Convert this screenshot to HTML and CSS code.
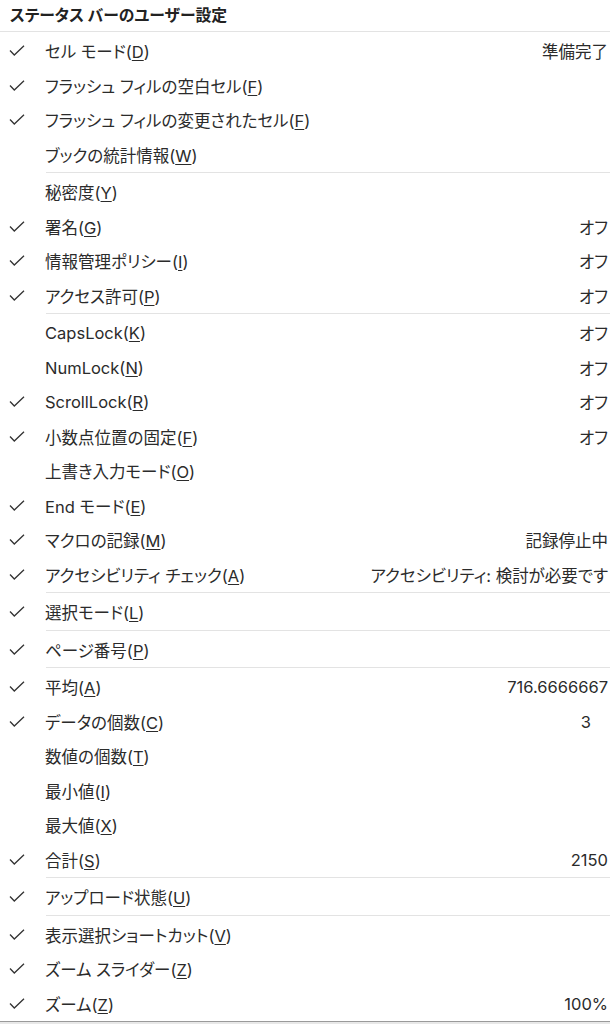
FILE: index.html
```html
<!DOCTYPE html>
<html lang="ja">
<head>
<meta charset="UTF-8" />
<title>ステータス バーのユーザー設定</title>
<link rel="stylesheet" href="styles.css">
</head>
<body>

<div class="menu">
  <div class="menu-title">ステータス バーのユーザー設定</div>

  <ul class="menu-list">
    <li class="item on"><span class="check"></span><span class="label">セル モード(<u>D</u>)</span><span class="value">準備完了</span></li>
    <li class="item on"><span class="check"></span><span class="label">フラッシュ フィルの空白セル(<u>F</u>)</span></li>
    <li class="item on"><span class="check"></span><span class="label">フラッシュ フィルの変更されたセル(<u>F</u>)</span></li>
    <li class="item"><span class="check"></span><span class="label">ブックの統計情報(<u>W</u>)</span></li>
    <li class="sep"></li>
    <li class="item"><span class="check"></span><span class="label">秘密度(<u>Y</u>)</span></li>
    <li class="item on"><span class="check"></span><span class="label">署名(<u>G</u>)</span><span class="value">オフ</span></li>
    <li class="item on"><span class="check"></span><span class="label">情報管理ポリシー(<u>I</u>)</span><span class="value">オフ</span></li>
    <li class="item on"><span class="check"></span><span class="label">アクセス許可(<u>P</u>)</span><span class="value">オフ</span></li>
    <li class="sep"></li>
    <li class="item"><span class="check"></span><span class="label">CapsLock(<u>K</u>)</span><span class="value">オフ</span></li>
    <li class="item"><span class="check"></span><span class="label">NumLock(<u>N</u>)</span><span class="value">オフ</span></li>
    <li class="item on"><span class="check"></span><span class="label">ScrollLock(<u>R</u>)</span><span class="value">オフ</span></li>
    <li class="item on"><span class="check"></span><span class="label">小数点位置の固定(<u>F</u>)</span><span class="value">オフ</span></li>
    <li class="item"><span class="check"></span><span class="label">上書き入力モード(<u>O</u>)</span></li>
    <li class="item on"><span class="check"></span><span class="label">End モード(<u>E</u>)</span></li>
    <li class="item on"><span class="check"></span><span class="label">マクロの記録(<u>M</u>)</span><span class="value">記録停止中</span></li>
    <li class="item on"><span class="check"></span><span class="label">アクセシビリティ チェック(<u>A</u>)</span><span class="value">アクセシビリティ: 検討が必要です</span></li>
    <li class="sep"></li>
    <li class="item on"><span class="check"></span><span class="label">選択モード(<u>L</u>)</span></li>
    <li class="sep"></li>
    <li class="item on"><span class="check"></span><span class="label">ページ番号(<u>P</u>)</span></li>
    <li class="sep"></li>
    <li class="item on"><span class="check"></span><span class="label">平均(<u>A</u>)</span><span class="value">716.6666667</span></li>
    <li class="item on"><span class="check"></span><span class="label">データの個数(<u>C</u>)</span><span class="value value-count">3</span></li>
    <li class="item"><span class="check"></span><span class="label">数値の個数(<u>T</u>)</span></li>
    <li class="item"><span class="check"></span><span class="label">最小値(<u>I</u>)</span></li>
    <li class="item"><span class="check"></span><span class="label">最大値(<u>X</u>)</span></li>
    <li class="item on"><span class="check"></span><span class="label">合計(<u>S</u>)</span><span class="value">2150</span></li>
    <li class="sep"></li>
    <li class="item on"><span class="check"></span><span class="label">アップロード状態(<u>U</u>)</span></li>
    <li class="sep"></li>
    <li class="item on"><span class="check"></span><span class="label">表示選択ショートカット(<u>V</u>)</span></li>
    <li class="item on"><span class="check"></span><span class="label">ズーム スライダー(<u>Z</u>)</span></li>
    <li class="item on"><span class="check"></span><span class="label">ズーム(<u>Z</u>)</span><span class="value">100%</span></li>
  </ul>
</div>

<div class="statusbar"></div>

<script>
  // draw the tick for every checked item
  var tick = '<svg width="16" height="12" viewBox="0 0 16 12"><path d="M1 5.5 L5.3 10 L15 0.8" fill="none" stroke="#333" stroke-width="1.3"/></svg>';
  var marks = document.querySelectorAll('.item.on .check');
  for (var i = 0; i < marks.length; i++) {
    marks[i].innerHTML = tick;
  }
</script>

</body>
</html>
```

FILE: styles.css
```css
body {
  margin: 0;
  background: #fff;
  color: #2b2b2b;
  font-family: Inter, "Noto Sans CJK JP", sans-serif;
  font-feature-settings: "palt";
  font-size: 16.5px;
}
.menu {
  height: 1021px;
  overflow: hidden;
}
.menu-title {
  height: 31px;
  line-height: 31px;
  padding-left: 10px;
  font-size: 15.8px;
  font-weight: bold;
  color: #222;
  border-bottom: 1px solid #e3e3e3;
}
.menu-list {
  list-style: none;
  margin: 0;
  padding: 2px 0 0 0;
}
.item {
  display: flex;
  align-items: center;
  height: 34.5px;
  padding-right: 2px;
  white-space: nowrap;
}
.check {
  flex: none;
  width: 36px;
  padding-left: 9px;
  display: flex;
  align-items: center;
}
.check svg {
  display: block;
}
.label {
  flex: 1;
}
.label u {
  text-underline-offset: 2px;
}
.value {
  flex: none;
}
.value-count {
  padding-right: 17px;
}
.sep {
  height: 1px;
  background: #e3e3e3;
  margin: 0 0 2px 46px;
}
.statusbar {
  height: 3px;
  border-top: 1px solid #9a9a9a;
  background: #e8e8e8;
}
```
